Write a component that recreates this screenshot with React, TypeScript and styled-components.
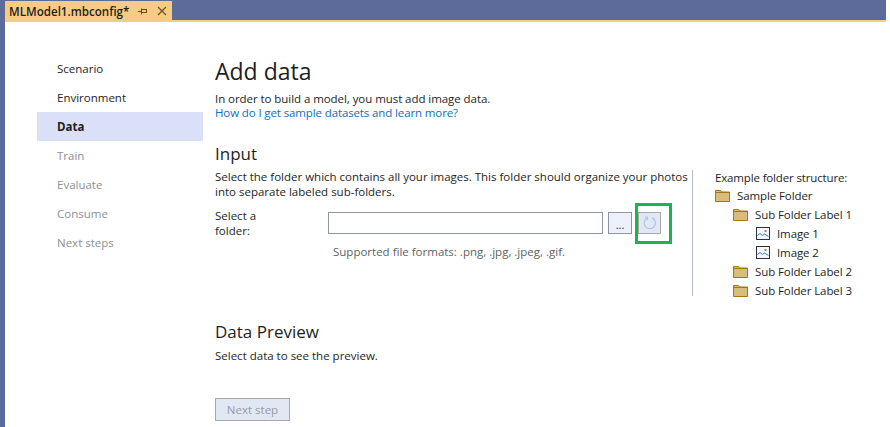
import React from "react";
import styled, { createGlobalStyle } from "styled-components";

const GlobalStyle = createGlobalStyle`
  html, body {
    margin: 0;
    padding: 0;
    background: #fff;
  }
  body {
    font-family: "Open Sans", "Noto Sans", sans-serif;
    font-size: 11.5px;
    color: #1e1e1e;
  }
`;

const Page = styled.div`
  width: 886px;
  height: 427px;
  overflow: hidden;
  box-sizing: border-box;
  background: #5c6b99;
  padding-left: 5px;
  display: flex;
  flex-direction: column;
`;
const TabBar = styled.div`
  height: 22px;
  display: flex;
  flex-shrink: 0;
  padding-top: 1px;
  box-sizing: border-box;
  border-bottom: 2px solid #f5cc84;
`;
const Tab = styled.div`
  width: 167px;
  height: 20px;
  background: #f5cc84;
  display: flex;
  align-items: center;
  padding-left: 4px;
  box-sizing: border-box;
  font-weight: 600;
  font-size: 11.6px;
  color: #1e1e1e;
  gap: 9px;
`;
const Body = styled.div`
  flex: 1;
  background: #fff;
  display: flex;
  padding: 32px 0 0 32px;
`;
const Nav = styled.div`
  width: 166px;
  flex-shrink: 0;
`;
const NavItem = styled.div<{ $state?: "active" | "disabled" }>`
  height: 29px;
  line-height: 29px;
  padding-left: 20px;
  font-weight: ${(p) => (p.$state === "active" ? 700 : 400)};
  background: ${(p) => (p.$state === "active" ? "#d9e0f8" : "transparent")};
  color: ${(p) => (p.$state === "disabled" ? "#8f8f93" : "#1e1e1e")};
`;
const Main = styled.div`
  flex: 1;
  padding: 2px 0 0 12px;
`;
const Title = styled.h1`
  margin: 0;
  font-weight: 400;
  font-size: 23px;
  line-height: 30px;
`;
const Para = styled.p`
  margin: 0;
  line-height: 15px;
`;
const Intro = styled(Para)`
  margin-top: 5px;
  letter-spacing: -0.06px;
`;
const Link = styled.a`
  display: block;
  color: #0e70c0;
  line-height: 14px;
  letter-spacing: -0.12px;
`;
const Heading = styled.h2`
  margin: 0;
  font-weight: 400;
  font-size: 17px;
  line-height: 22px;
`;
const InputSection = styled.div`
  margin-top: 23px;
  display: flex;
  height: 153px;
`;
const InputLeft = styled.div`
  width: 477px;
  flex-shrink: 0;
`;
const InputText = styled(Para)`
  margin-top: 4px;
`;
const FolderRow = styled.div`
  margin-top: 9px;
  display: flex;
  align-items: flex-start;
`;
const FolderLabel = styled.div`
  width: 113px;
  line-height: 15px;
`;
const PathInput = styled.div`
  width: 275px;
  height: 22px;
  box-sizing: border-box;
  margin-top: 4px;
  border: 1px solid #8b97a8;
  background: #fff;
  flex-shrink: 0;
`;
const BrowseButton = styled.div`
  width: 24px;
  height: 22px;
  box-sizing: border-box;
  margin: 4px 0 0 5px;
  border: 1px solid #8b97a8;
  background: #eef1fb;
  text-align: center;
  line-height: 23px;
  font-size: 11px;
  flex-shrink: 0;
`;
const RefreshButton = styled.div`
  position: relative;
  width: 23px;
  height: 22px;
  box-sizing: border-box;
  margin: 4px 0 0 6px;
  border: 1px solid #a8a8a8;
  background: #e1e8f4;
  display: flex;
  align-items: center;
  justify-content: center;
  flex-shrink: 0;
`;
const Highlight = styled.div`
  position: absolute;
  left: -4px;
  top: -10px;
  width: 37px;
  height: 41px;
  box-sizing: border-box;
  border: 3px solid #22b14c;
`;
const Hint = styled.div`
  margin: 6px 0 0 118px;
  line-height: 15px;
  color: #5f5f5f;
`;
const Example = styled.div`
  border-left: 1px solid #b6bdc6;
  height: 126px;
  padding-left: 22px;
  margin-top: 27px;
`;
const ExampleTitle = styled.div`
  line-height: 15px;
  margin-bottom: 1px;
  letter-spacing: -0.15px;
`;
const TreeRow = styled.div<{ $indent: number }>`
  height: 19px;
  display: flex;
  align-items: center;
  gap: 7px;
  letter-spacing: -0.1px;
  padding-left: ${(p) => p.$indent}px;
`;
const PreviewSection = styled.div`
  margin-top: 25px;
`;
const PreviewText = styled(Para)`
  margin-top: 5px;
`;
const NextButton = styled.div`
  margin-top: 35px;
  width: 75px;
  height: 23px;
  box-sizing: border-box;
  border: 1px solid #a8a8a8;
  background: #e1e8f4;
  color: #9a9a9f;
  display: flex;
  align-items: center;
  justify-content: center;
`;

const PinIcon = () => (
  <svg width="10" height="10" viewBox="0 0 10 10" fill="none" stroke="#6b4a1e" strokeWidth="1">
    <path d="M0 5.5h3M3.5 2.5v6M3.5 3.5h5v3h-5M8.5 3v4" />
  </svg>
);
const CloseIcon = () => (
  <svg width="10" height="10" viewBox="0 0 10 10" fill="none" stroke="#6b4a1e" strokeWidth="1.1">
    <path d="M1 1l8 8M9 1l-8 8" />
  </svg>
);
const RefreshIcon = () => (
  <svg width="14" height="14" viewBox="0 0 14 14" fill="none" stroke="#a9c8ea" strokeWidth="1.2">
    <path d="M4 2.2A5.6 5.6 0 1 0 9 1.9" />
    <path d="M1.8 1.2h2.6v2.8" />
  </svg>
);
const FolderIcon = () => (
  <svg width="15" height="12" viewBox="0 0 15 12">
    <path d="M.5 11.5V.5h5l1 1.5h8v9.5z" fill="#d8bd7c" stroke="#a5780f" />
    <path d="M.5 2.5h14" stroke="#a5780f" />
  </svg>
);
const ImageIcon = () => (
  <svg width="14" height="13" viewBox="0 0 14 13" fill="none">
    <rect x=".5" y=".5" width="13" height="12" fill="#f4f7fb" stroke="#2c3340" />
    <path d="M1.5 8.5l2.5-2 2.5 2 2-1.5 4 2.5" stroke="#2f7cc2" />
    <rect x="8.5" y="3" width="2" height="2" fill="#b8892b" />
  </svg>
);

const navItems: { label: string; state?: "active" | "disabled" }[] = [
  { label: "Scenario" },
  { label: "Environment" },
  { label: "Data", state: "active" },
  { label: "Train", state: "disabled" },
  { label: "Evaluate", state: "disabled" },
  { label: "Consume", state: "disabled" },
  { label: "Next steps", state: "disabled" },
];

const tree = [
  { label: "Sample Folder", indent: 0, icon: "folder" },
  { label: "Sub Folder Label 1", indent: 18, icon: "folder" },
  { label: "Image 1", indent: 41, icon: "image" },
  { label: "Image 2", indent: 41, icon: "image" },
  { label: "Sub Folder Label 2", indent: 18, icon: "folder" },
  { label: "Sub Folder Label 3", indent: 18, icon: "folder" },
];

const App = () => {
  return (
    <Page>
      <GlobalStyle />
      <TabBar>
        <Tab>
          <span>MLModel1.mbconfig*</span>
          <PinIcon />
          <CloseIcon />
        </Tab>
      </TabBar>
      <Body>
        <Nav>
          {navItems.map((item) => (
            <NavItem key={item.label} $state={item.state}>
              {item.label}
            </NavItem>
          ))}
        </Nav>
        <Main>
          <Title>Add data</Title>
          <Intro>In order to build a model, you must add image data.</Intro>
          <Link>How do I get sample datasets and learn more?</Link>
          <InputSection>
            <InputLeft>
              <Heading>Input</Heading>
              <InputText>
                Select the folder which contains all your images. This folder should organize your photos
                <br />
                into separate labeled sub-folders.
              </InputText>
              <FolderRow>
                <FolderLabel>
                  Select a
                  <br />
                  folder:
                </FolderLabel>
                <PathInput />
                <BrowseButton>...</BrowseButton>
                <RefreshButton>
                  <RefreshIcon />
                  <Highlight />
                </RefreshButton>
              </FolderRow>
              <Hint>Supported file formats: .png, .jpg, .jpeg, .gif.</Hint>
            </InputLeft>
            <Example>
              <ExampleTitle>Example folder structure:</ExampleTitle>
              {tree.map((row) => (
                <TreeRow key={row.label} $indent={row.indent}>
                  {row.icon === "folder" ? <FolderIcon /> : <ImageIcon />}
                  <span>{row.label}</span>
                </TreeRow>
              ))}
            </Example>
          </InputSection>
          <PreviewSection>
            <Heading>Data Preview</Heading>
            <PreviewText>Select data to see the preview.</PreviewText>
          </PreviewSection>
          <NextButton>Next step</NextButton>
        </Main>
      </Body>
    </Page>
  );
};

export default App;
